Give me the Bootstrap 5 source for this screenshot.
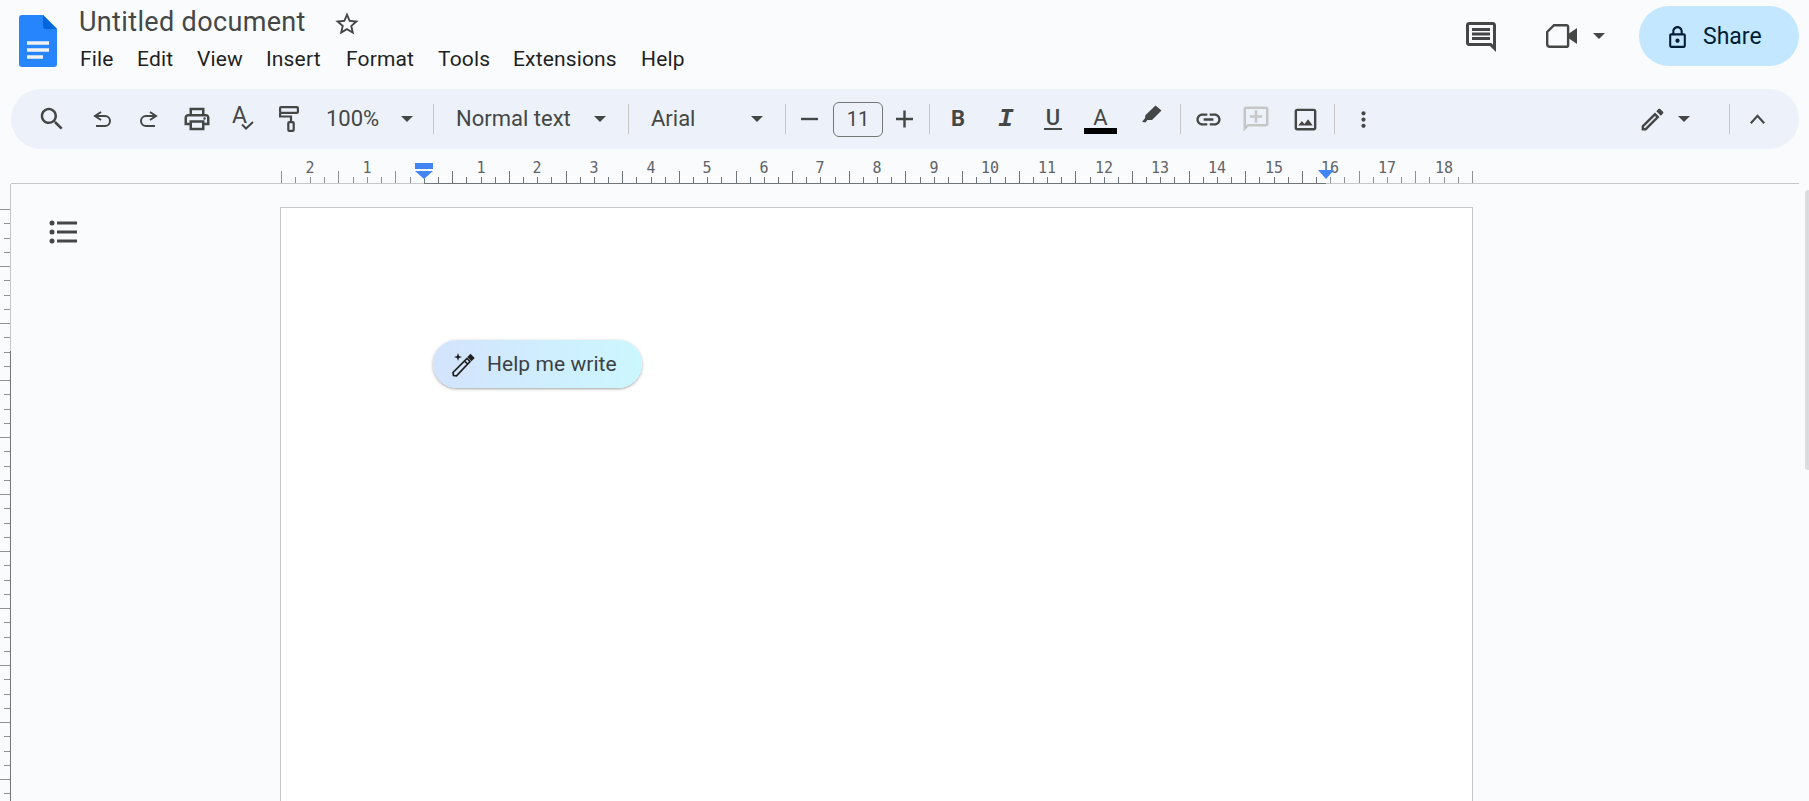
<!doctype html>
<html lang="en"><head><meta charset="utf-8"><title>Untitled document</title>
<link href="https://cdn.jsdelivr.net/npm/bootstrap@5.3.0/dist/css/bootstrap.min.css" rel="stylesheet">
<style>
html,body{height:100%;overflow:hidden}
body{background:#f9fbfd;font-family:Roboto,"Liberation Sans",sans-serif;color:#444746}
svg{display:block;flex-shrink:0}
.gd-head{height:89px;padding-left:19px;padding-right:10px}
.gd-logo{margin-top:15px;margin-right:22px}
.gd-titlerow{height:41px;padding-top:7px}
.gd-title{font-size:27px;letter-spacing:.35px;line-height:30px;width:254px}
.gd-star{margin-top:3px}
.gd-menu{font-size:21px;letter-spacing:.15px;line-height:28px;color:#1f1f1f;margin-top:4px;margin-left:1px}
.gd-headright{margin-top:6px;height:60px}
.gd-comment{margin-top:2px}
.gd-share{width:160px;height:60px;border-radius:30px;background:#c2e7ff;color:#001d35;font-size:23px;padding:2px 0 0 26px;gap:13px;border:0}
.gd-bar{height:60px;margin:0 10px 1px 11px;background:#edf2fa;border-radius:30px;padding-left:26px;padding-right:34px}
.gd-bar>*{flex-shrink:0}
.gd-tool{font-size:22px;line-height:30px;color:#444746;display:flex;align-items:center}
.gd-sep{width:1px;height:30px;background:#c7c7c7;display:block}
.gd-sepw{display:flex;align-items:center}
.gd-tri{width:0;height:0;border-left:6px solid transparent;border-right:6px solid transparent;border-top:6px solid #444746}
.gd-box{width:50px;height:35px;border:1px solid #747775;border-radius:6px;text-align:center;line-height:33px;font-size:20px}
.gd-b{font-weight:700}
.gd-i{font-family:"Liberation Mono",monospace;font-weight:700;font-style:italic;font-size:26px}
.gd-u{font-weight:500;font-size:22px;line-height:19px;border-bottom:2px solid #444746;width:18px;text-align:center;display:block;height:22px}
.gd-a{font-size:22px;width:33px;line-height:20px;text-align:center;border-bottom:6px solid #000;display:block;font-weight:400;margin-top:4px}
.gd-spell{font-size:23px;line-height:17px;position:relative;width:24px;height:24px;display:block;padding-left:1px}
.gd-spell svg{position:absolute;left:10px;top:14px}
.gd-hl{margin-bottom:10px}
.tw14{width:14px}.tw16{width:16px}.tw17{width:17px}.tw21{width:21px}.tw22{width:22px}.tw23{width:23px}.tw32{width:32px}.tw33{width:33px}.tw34{width:34px}.tw38{width:38px}.tw40{width:40px}.tw42{width:42px}.tw43{width:43px}.tw46{width:46px}.tw47{width:47px}.tw48{width:48px}.tw49{width:49px}.tw50{width:50px}.tw51{width:51px}.tw56{width:56px}.tw57{width:57px}.tw58{width:58px}.tw60{width:60px}.tw63{width:63px}.tw69{width:69px}.tw75{width:75px}.tw80{width:80px}.tw83{width:83px}.tw92{width:92px}.tw100{width:100px}.tw128{width:128px}.tw138{width:138px}
.gd-doc{height:617px;overflow:hidden;position:relative}
.gd-outline{width:269px;padding:36px 0 0 38px}
.gd-vrule{width:11px}
.gd-page{width:1193px;margin-top:23px;background:#fff;border:1px solid #c7c7c7;border-bottom:0;position:relative}
.gd-help{position:absolute;left:152px;top:132px;width:209px;height:48px;border-radius:24px;background:linear-gradient(90deg,#d3e3fd,#ccf7ff);box-shadow:0 1px 2px rgba(60,64,67,.3),0 1px 3px 1px rgba(60,64,67,.15);font-size:21px;letter-spacing:.05px;color:#3c4043;padding:2px 0 0 19px;gap:12px}
.gd-scroll{position:absolute;right:0;top:6px;width:4px;height:280px;background:#dadce0;border-radius:3px 0 0 3px}
.gd-rtext{font-family:"DejaVu Sans Mono",monospace;font-size:15px;fill:#5f6368;text-anchor:middle}
</style></head>
<body class="d-flex flex-column">
<header class="gd-head d-flex align-items-start">
  <svg class="gd-logo" width="38" height="52" viewBox="0 0 38 52"><path d="M3 0H24L38 14V49a3 3 0 0 1-3 3H3a3 3 0 0 1-3-3V3a3 3 0 0 1 3-3Z" fill="#2684fc"/><path d="M24 0 38 14H27a3 3 0 0 1-3-3Z" fill="#0066da"/><path d="M8 28H30M8 35H30M8 42H24" stroke="#f1f1f1" stroke-width="3.4"/></svg>
  <div>
    <div class="gd-titlerow d-flex align-items-start">
      <span class="gd-title">Untitled document</span>
      <svg class="gd-star" width="28" height="28" viewBox="0 0 24 24" fill="#444746"><path d="M22 9.24l-7.19-.62L12 2 9.19 8.63 2 9.24l5.46 4.73L5.82 21 12 17.27 18.18 21l-1.63-7.03L22 9.24zM12 15.4l-3.76 2.27 1-4.28-3.32-2.88 4.38-.38L12 6.1l1.71 4.04 4.38.38-3.32 2.88 1 4.28L12 15.4z"/></svg>
    </div>
    <nav class="gd-menu d-flex"><span class="tw57">File</span><span class="tw60">Edit</span><span class="tw69">View</span><span class="tw80">Insert</span><span class="tw92">Format</span><span class="tw75">Tools</span><span class="tw128">Extensions</span><span>Help</span></nav>
  </div>
  <div class="gd-headright ms-auto d-flex align-items-center">
    <span class="tw83"><svg class="gd-comment" width="36" height="36" viewBox="0 0 24 24" fill="#444746"><path d="M21.99 4c0-1.1-.89-2-1.99-2H4c-1.1 0-2 .9-2 2v12c0 1.1.9 2 2 2h14l4 4-.01-18zM20 4v13.17L18.83 16H4V4h16zM6 12h12v2H6zm0-3h12v2H6zm0-3h12v2H6z"/></svg></span>
    <span class="tw47"><svg width="32" height="24" viewBox="0 0 32 24"><path d="M8 1.2H20.5a1.6 1.6 0 0 1 1.6 1.6V21.2a1.6 1.6 0 0 1-1.6 1.6H4a2.8 2.8 0 0 1-2.8-2.8V8Z" fill="none" stroke="#444746" stroke-width="2.4"/><path d="M23 9.5 31 4V20L23 14.5Z" fill="#444746"/></svg></span>
    <span class="tw46"><span class="gd-tri d-block"></span></span>
    <button class="gd-share d-flex align-items-center" type="button"><svg width="25" height="25" viewBox="0 0 24 24" fill="#001d35"><path d="M18 8h-1V6c0-2.76-2.24-5-5-5S7 3.24 7 6v2H6c-1.1 0-2 .9-2 2v10c0 1.1.9 2 2 2h12c1.1 0 2-.9 2-2V10c0-1.1-.9-2-2-2zM9 6c0-1.66 1.34-3 3-3s3 1.34 3 3v2H9V6zm9 14H6V10h12v10zm-6-3c1.1 0 2-.9 2-2s-.9-2-2-2-2 .9-2 2 .9 2 2 2z"/></svg><span>Share</span></button>
  </div>
</header>

<div class="gd-bar d-flex align-items-center">
  <span class="gd-tool tw56"><svg width="30" height="30" viewBox="0 0 24 24" fill="#444746"><path d="M15.5 14h-.79l-.28-.27C15.41 12.59 16 11.11 16 9.5 16 5.91 13.09 3 9.5 3S3 5.91 3 9.5 5.91 16 9.5 16c1.61 0 3.09-.59 4.23-1.57l.27.28v.79l5 4.99L20.49 19l-4.99-5zm-6 0C7.01 14 5 11.99 5 9.5S7.01 5 9.5 5 14 7.01 14 9.5 11.99 14 9.5 14z"/></svg></span>
  <span class="gd-tool tw47"><svg width="18" height="16" viewBox="0 0 18 16" fill="none" stroke="#444746" stroke-width="2"><path d="M8 1 2 5 8 9M2 5H12A5 5 0 0 1 12 15H3"/></svg></span>
  <span class="gd-tool tw42"><svg width="18" height="16" viewBox="0 0 18 16" fill="none" stroke="#444746" stroke-width="2"><path d="M10 1 16 5 10 9M16 5H6A5 5 0 0 0 6 15H15"/></svg></span>
  <span class="gd-tool tw49"><svg width="30" height="30" viewBox="0 0 24 24" fill="#444746"><path d="M19 8h-1V3H6v5H5c-1.66 0-3 1.34-3 3v6h4v4h12v-4h4v-6c0-1.66-1.34-3-3-3zM8 5h8v3H8V5zm8 12v2H8v-4h8v2zm2-2v-2H6v2H4v-4c0-.55.45-1 1-1h14c.55 0 1 .45 1 1v4h-2z"/><circle cx="18" cy="11.5" r="1"/></svg></span>
  <span class="gd-tool tw48"><span class="gd-spell">A<svg width="13" height="9" viewBox="0 0 13 9" fill="none" stroke="#444746" stroke-width="2"><path d="M1 3.500 5 7.500 12 1"/></svg></span></span>
  <span class="gd-tool tw47"><svg width="20" height="26" viewBox="0 0 20 26" fill="none" stroke="#444746" stroke-width="2.2"><rect x="1.1" y="1.1" width="17.8" height="5.8" rx="1"/><path d="M1.1 7V10.5H12V16"/><rect x="9.3" y="16.1" width="5.4" height="8.8" rx="1"/></svg></span>
  <span class="gd-tool tw75">100%</span>
  <span class="gd-tool tw32"><span class="gd-tri"></span></span>
  <span class="gd-sepw tw23"><span class="gd-sep"></span></span>
  <span class="gd-tool tw138">Normal text</span>
  <span class="gd-tool tw34"><span class="gd-tri"></span></span>
  <span class="gd-sepw tw23"><span class="gd-sep"></span></span>
  <span class="gd-tool tw100">Arial</span>
  <span class="gd-tool tw34"><span class="gd-tri"></span></span>
  <span class="gd-sepw tw16"><span class="gd-sep"></span></span>
  <span class="gd-tool tw32"><svg width="17" height="18" viewBox="0 0 17 18"><path d="M0 9H17" stroke="#444746" stroke-width="2.4"/></svg></span>
  <span class="gd-tool tw63"><span class="gd-box">11</span></span>
  <span class="gd-tool tw33"><svg width="17" height="18" viewBox="0 0 17 18"><path d="M0 9H17M8.5 .5V17.5" stroke="#444746" stroke-width="2.4"/></svg></span>
  <span class="gd-sepw tw22"><span class="gd-sep"></span></span>
  <span class="gd-tool tw47 gd-b">B</span>
  <span class="gd-tool tw46 gd-i">I</span>
  <span class="gd-tool tw40"><span class="gd-u">U</span></span>
  <span class="gd-tool tw58"><span class="gd-a">A</span></span>
  <span class="gd-tool tw38"><svg class="gd-hl" width="20" height="18" viewBox="0 0 20 18" fill="#444746"><path d="M13.5 .5 19.5 5.5 10 15H5.500L3.400 17.400 0 16.800 3 13.200 3.400 10.200Z"/></svg></span>
  <span class="gd-sepw tw14"><span class="gd-sep"></span></span>
  <span class="gd-tool tw47"><svg width="29" height="29" viewBox="0 0 24 24" fill="#444746"><path d="M3.9 12c0-1.71 1.39-3.1 3.1-3.1h4V7H7c-2.76 0-5 2.24-5 5s2.24 5 5 5h4v-1.9H7c-1.71 0-3.1-1.39-3.1-3.1zM8 13h8v-2H8v2zm9-6h-4v1.9h4c1.71 0 3.1 1.39 3.1 3.1s-1.39 3.1-3.1 3.1h-4V17h4c2.76 0 5-2.24 5-5s-2.24-5-5-5z"/></svg></span>
  <span class="gd-tool tw50"><svg width="30" height="30" viewBox="0 0 24 24" fill="#c4c7c5"><path transform="matrix(-1 0 0 1 24 0)" d="M22 4c0-1.100-.9-2-2-2H4c-1.100 0-2 .9-2 2v12c0 1.100.9 2 2 2h14l4 4V4zm-2 13.170L18.830 16H4V4h16v13.170zM13 5h-2v4H7v2h4v4h2v-4h4V9h-4z"/></svg></span>
  <span class="gd-tool tw43"><svg width="29" height="29" viewBox="0 0 24 24" fill="#444746"><path d="M19 5v14H5V5h14m0-2H5c-1.1 0-2 .9-2 2v14c0 1.1.9 2 2 2h14c1.1 0 2-.9 2-2V5c0-1.1-.9-2-2-2zm-4.860 8.860l-3 3.870L9 13.140 6 17h12l-3.860-5.140z"/></svg></span>
  <span class="gd-sepw tw17"><span class="gd-sep"></span></span>
  <span class="gd-tool"><svg width="25" height="25" viewBox="0 0 24 24" fill="#444746"><path d="M12 8c1.100 0 2-.9 2-2s-.9-2-2-2-2 .9-2 2 .9 2 2 2zm0 2c-1.100 0-2 .9-2 2s.9 2 2 2 2-.9 2-2-.9-2-2-2zm0 6c-1.100 0-2 .9-2 2s.9 2 2 2 2-.9 2-2-.9-2-2-2z"/></svg></span>
  <span class="gd-tool tw40 ms-auto"><svg width="29" height="29" viewBox="0 0 24 24" fill="#444746"><path d="M3 17.250V21h3.750L17.810 9.940l-3.750-3.750L3 17.250zM5.920 19H5v-.92l9.060-9.060.92.92L5.920 19zM20.710 5.630l-2.340-2.340c-.2-.2-.45-.29-.71-.29s-.51.1-.7.29l-1.830 1.830 3.750 3.750 1.830-1.830c.39-.39.39-1.020 0-1.410z"/></svg></span>
  <span class="gd-tool tw51"><span class="gd-tri"></span></span>
  <span class="gd-sepw tw21"><span class="gd-sep"></span></span>
  <span class="gd-tool"><svg width="15" height="10" viewBox="0 0 15 10" fill="none" stroke="#444746" stroke-width="2.2"><path d="M.8 9.200 7.500 1.800 14.200 9.200"/></svg></span>
</div>

<div id="gd-hruler"></div>

<main class="gd-doc d-flex">
  <div class="gd-vrule" id="gd-vruler"></div>
  <aside class="gd-outline"><svg width="28" height="24" viewBox="0 0 28 24"><g fill="#444746"><circle cx="3" cy="3" r="2.500"/><circle cx="3" cy="12" r="2.500"/><circle cx="3" cy="21" r="2.500"/></g><path d="M8 3H28M8 12H28M8 21H28" stroke="#444746" stroke-width="3"/></svg></aside>
  <section class="gd-page">
    <div class="gd-help d-flex align-items-center"><svg width="23" height="24" viewBox="0 0 23 24" fill="none" stroke="#1f1f1f" stroke-width="1.700"><path d="M1.500 22.500 1 19.500 15 5.500 18 8.500 4.500 22.800ZM12.500 8 15.500 11"/><path d="M16.500 4 18.500 2 21.500 5 19.500 7Z" fill="#1f1f1f"/><path d="M6 0 7 3 10 4 7 5 6 8 5 5 2 4 5 3Z" fill="#1f1f1f" stroke="none"/></svg><span>Help me write</span></div>
  </section>
  <div class="gd-scroll"></div>
</main>

<script>
(function(){
  var s='<svg width="1809" height="34" viewBox="0 0 1809 34">';
  s+='<path d="M11 33.500H424" stroke="#c7c7c7"/><path d="M424 33.500H1326" stroke="#70757a"/><path d="M1326 33.500H1799" stroke="#c7c7c7"/>';
  for(var k=-10;k<=74;k++){
    var u=k<0?14.3:14.16, x=Math.round(424+k*u), m=((k%4)+4)%4, inText=x>=424&&x<=1326;
    s+='<path d="M'+(x+.5)+' '+(m===2?21:27)+'V33" stroke="'+(inText?'#70757a':'#8e9195')+'"/>';
    if(m===0&&k!==0){ s+='<text class="gd-rtext" x="'+x+'" y="22.500">'+Math.abs(k/4)+'</text>'; }
  }
  s+='<rect x="415" y="13" width="18" height="6" fill="#4285f4"/><path d="M415 21H433L424 29Z" fill="#4285f4"/><path d="M1318 20H1334L1326 29Z" fill="#4285f4"/></svg>';
  document.getElementById('gd-hruler').innerHTML=s;
  var v='<svg width="11" height="617" viewBox="0 0 11 617"><path d="M10.500 0V167" stroke="#c7c7c7"/><path d="M10.500 167V617" stroke="#70757a"/>';
  for(var i=0;i<42;i++){
    var y=Math.round(25+i*14.25)+.5;
    v+='<path d="M'+(i%4===0?0:4)+' '+y+'H10" stroke="#8e9195"/>';
  }
  document.getElementById('gd-vruler').innerHTML=v+'</svg>';
})();
</script>
<script src="https://cdn.jsdelivr.net/npm/bootstrap@5.3.0/dist/js/bootstrap.bundle.min.js"></script>
</body></html>
